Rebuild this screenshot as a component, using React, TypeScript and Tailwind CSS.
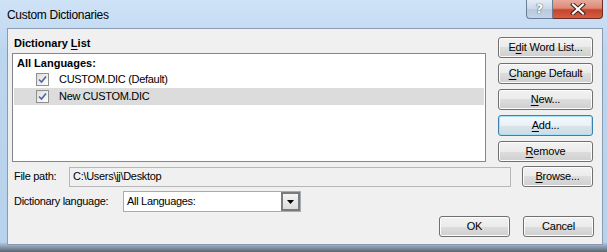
import React from "react";

const font = { fontFamily: '"Segoe UI", "Liberation Sans", Arial, sans-serif' };

function U({ children }: { children: React.ReactNode }) {
  return <span className="underline underline-offset-[2px]">{children}</span>;
}

function Btn({
  children,
  className = "",
  focused = false,
}: {
  children: React.ReactNode;
  className?: string;
  focused?: boolean;
}) {
  return (
    <div
      className={
        "h-[21px] rounded-[3px] border flex items-center justify-center text-[11px] tracking-[-0.2px] text-black " +
        (focused
          ? "border-[#3c7fb1] shadow-[inset_0_0_0_1px_#a6e1f7] bg-[linear-gradient(#f4f8fb_0%,#eaf1f6_50%,#dae3ea_50%,#cfdbe3_100%)] "
          : "border-[#707070] shadow-[inset_0_0_0_1px_#fcfcfc] bg-[linear-gradient(#f2f2f2_0%,#ebebeb_50%,#dddddd_50%,#cfcfcf_100%)] ") +
        className
      }
    >
      {children}
    </div>
  );
}

function Check() {
  return (
    <div className="w-[13px] h-[13px] border border-[#8f8f8f] bg-[linear-gradient(135deg,#dcdcdc,#ffffff)] flex items-center justify-center">
      <svg width="9" height="9" viewBox="0 0 9 9">
        <path d="M1 4.5 L3.5 7 L8 1.5" fill="none" stroke="#4f64a0" strokeWidth="1.6" />
      </svg>
    </div>
  );
}

export default function App() {
  return (
    <div
      className="w-[607px] h-[252px] overflow-hidden bg-[linear-gradient(180deg,#cfe3f7_0%,#bdd6ef_20%,#b9d2ec_96%,#5a6470_100%)] flex flex-col"
      style={font}
    >
      {/* Title bar */}
      <div className="h-[28px] flex items-start justify-between shrink-0">
        <div className="pl-[7px] pt-[6px] text-[12px] tracking-[-0.3px] text-black">Custom Dictionaries</div>
        <div className="flex mr-[4px]">
          <div className="w-[27px] h-[19px] border border-[#6a7c96] border-t-0 rounded-bl-[4px] bg-[linear-gradient(#e4ecf5_0%,#cbd8e8_50%,#b8c9de_50%,#c3d4e8_100%)] flex items-center justify-center">
            <span className="text-[13px] font-bold text-white [text-shadow:0_0_1px_#34495f,0_0_1px_#34495f]" style={{ fontFamily: '"DejaVu Sans", sans-serif' }}>
              ?
            </span>
          </div>
          <div className="w-[50px] h-[19px] border border-[#6b2c24] border-t-0 border-l-0 rounded-br-[4px] bg-[linear-gradient(#e9a99c_0%,#dd8a77_45%,#c8432c_55%,#d25f45_100%)] flex items-center justify-center">
            <svg width="16" height="12" viewBox="0 0 16 12">
              <path d="M3 1.5 L13 10.5 M13 1.5 L3 10.5" stroke="#3b1a14" strokeWidth="4" strokeLinecap="square" />
              <path d="M3 1.5 L13 10.5 M13 1.5 L3 10.5" stroke="#ffffff" strokeWidth="2.2" strokeLinecap="square" />
            </svg>
          </div>
        </div>
      </div>

      {/* Client area */}
      <div className="ml-[7px] w-[596px] h-[217px] border border-[#8a9bb1] bg-[#f0f0f0] pl-[4px] pr-[8px] pt-[7px] flex flex-col text-[11px] tracking-[-0.3px] text-black">
        {/* Top section */}
        <div className="flex gap-[12px]">
          <div className="w-[474px] flex flex-col">
            <div className="h-[17px] pl-[2px] font-bold leading-[14px] tracking-[0px]">
              Dictionary <U>L</U>ist
            </div>
            <div className="h-[109px] border border-[#828790] bg-white pt-[1px] px-[1px]">
              <div className="h-[16px] pl-[3px] font-bold tracking-[0px] leading-[16px]">All Languages:</div>
              <div className="h-[17px] flex items-center pl-[22px] gap-[10px]">
                <Check />
                <span>CUSTOM.DIC (Default)</span>
              </div>
              <div className="h-[17px] flex items-center pl-[22px] gap-[10px] bg-[#dcdcdc]">
                <Check />
                <span>New CUSTOM.DIC</span>
              </div>
            </div>
          </div>
          <div className="w-[95px] flex flex-col gap-[5px] pt-[1px]">
            <Btn>
              E<U>d</U>it Word List...
            </Btn>
            <Btn>
              <U>C</U>hange Default
            </Btn>
            <Btn>
              <U>N</U>ew...
            </Btn>
            <Btn focused>
              <U>A</U>dd...
            </Btn>
            <Btn>
              <U>R</U>emove
            </Btn>
          </div>
        </div>

        {/* File path row */}
        <div className="flex items-center mt-[4px] h-[21px]">
          <div className="w-[57px] pl-[2px]">File path:</div>
          <div className="w-[442px] h-[20px] border border-[#b7b7b7] bg-[#f0f0f0] pl-[3px] flex items-center">
            C:\Users\jj\Desktop
          </div>
          <Btn className="ml-[11px] w-[71px]">
            <U>B</U>rowse...
          </Btn>
        </div>

        {/* Language row */}
        <div className="flex items-center mt-[4px] h-[21px]">
          <div className="w-[111px] pl-[2px]">Dictionary language:</div>
          <div className="w-[178px] h-[21px] border border-[#a5acb5] bg-white flex items-center">
            <div className="flex-1 pl-[3px]">All Languages:</div>
            <div className="w-[19px] h-[19px] border-2 border-[#7a7a7a] bg-[linear-gradient(#f4f4f4,#dcdcdc)] flex items-center justify-center">
              <svg width="7" height="4" viewBox="0 0 7 4">
                <path d="M0 0 H7 L3.5 4 Z" fill="#000" />
              </svg>
            </div>
          </div>
        </div>

        {/* OK / Cancel */}
        <div className="flex justify-end gap-[13px] mt-[4px]">
          <Btn className="w-[71px]">OK</Btn>
          <Btn className="w-[71px]">Cancel</Btn>
        </div>
      </div>
    </div>
  );
}
